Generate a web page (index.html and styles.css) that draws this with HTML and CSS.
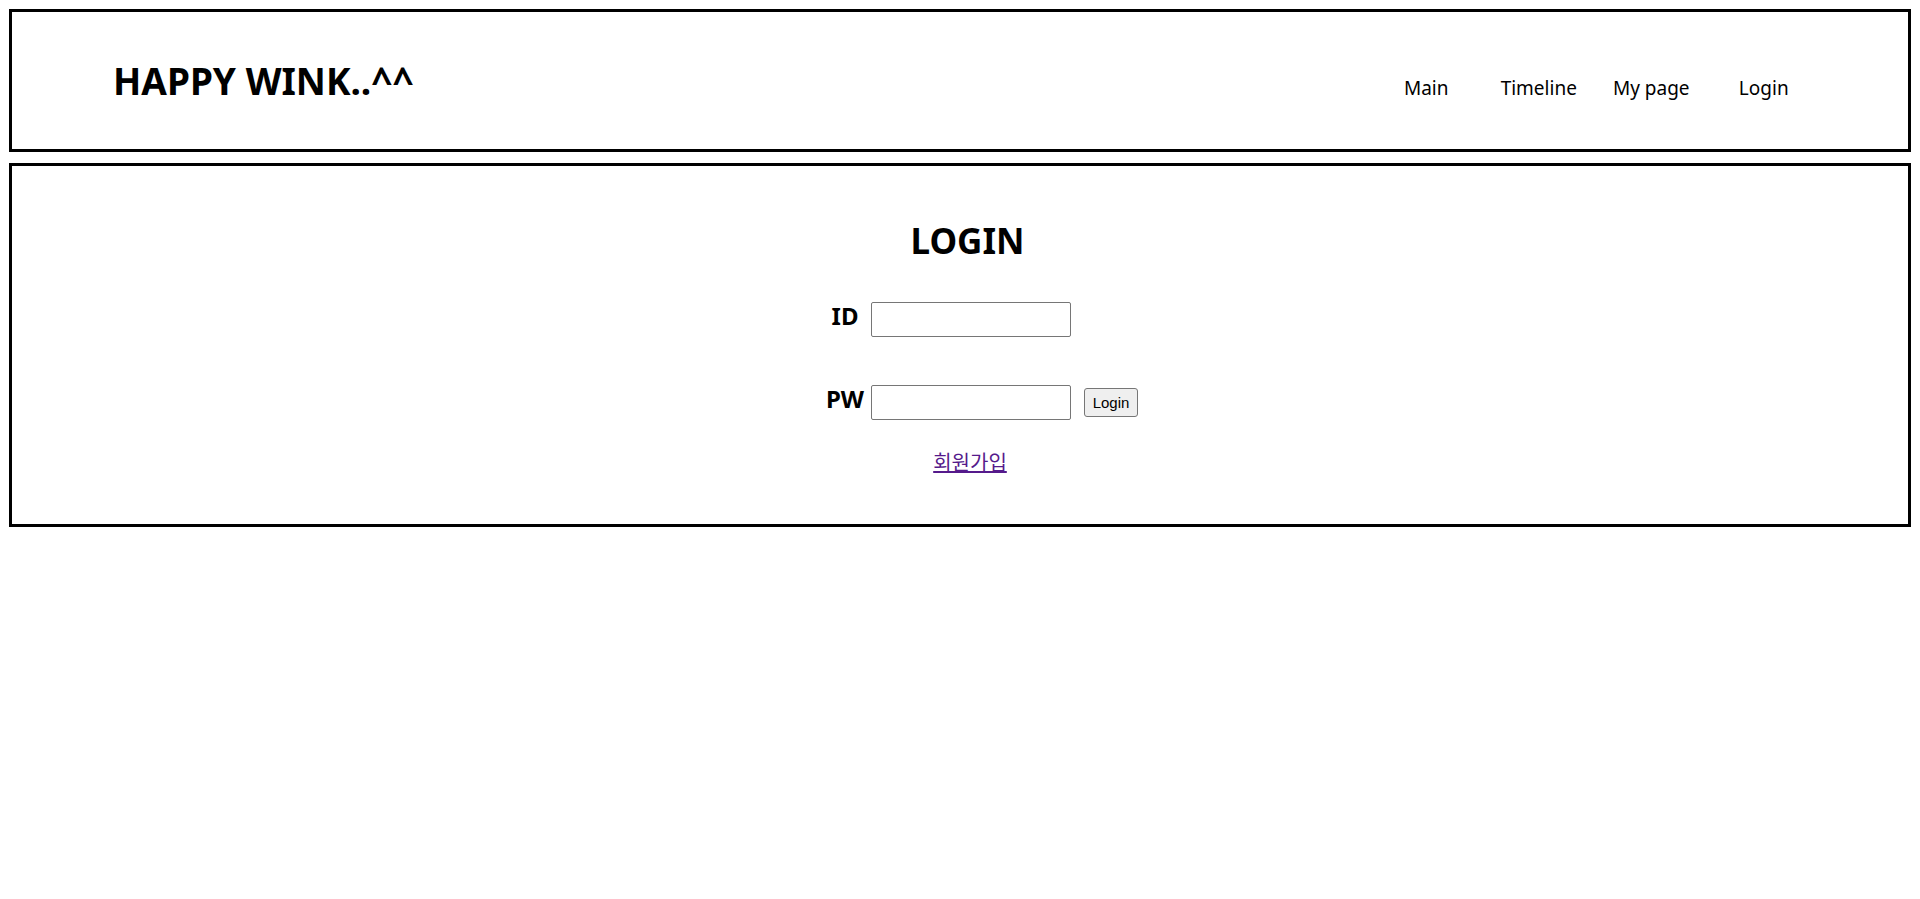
FILE: index.html
```html
<!DOCTYPE html>
<html lang="ko">
<head>
<meta charset="utf-8">
<title>HAPPY WINK</title>
<link rel="stylesheet" href="styles.css">
</head>
<body>
<header class="site-header">
  <h1 class="logo">HAPPY WINK..^^</h1>
  <nav class="nav">
    <a class="nav-item" href="#">Main</a>
    <a class="nav-item" href="#">Timeline</a>
    <a class="nav-item" href="#">My page</a>
    <a class="nav-item" href="#">Login</a>
  </nav>
</header>
<main class="login-box">
  <h2 class="login-title">LOGIN</h2>
  <form class="login-form">
    <div class="form-row">
      <label class="field-label" for="uid">ID</label>
      <input class="field-input" id="uid" type="text">
    </div>
    <div class="form-row row-pw">
      <label class="field-label label-pw" for="upw">PW</label>
      <input class="field-input" id="upw" type="password">
      <button class="login-btn" type="button">Login</button>
    </div>
  </form>
  <a class="join-link" href="#">회원가입</a>
</main>
</body>
</html>
```
FILE: styles.css
```css
html, body {
  margin: 0;
  padding: 0;
}
body {
  margin: 9px;
  font-family: "Noto Sans", "Open Sans", "Noto Sans CJK KR", sans-serif;
  color: #000;
  background: #fff;
}
.site-header {
  box-sizing: border-box;
  height: 143px;
  border: 3px solid #000;
  display: flex;
  justify-content: space-between;
  align-items: baseline;
  padding: 50px 88px 0 101px;
}
.logo {
  margin: 0;
  font-size: 37px;
  line-height: 37px;
  font-weight: 700;
}
.nav {
  display: flex;
}
.nav-item {
  width: 112.5px;
  text-align: center;
  font-size: 19px;
  line-height: 20px;
  color: #000;
  text-decoration: none;
}
.login-box {
  box-sizing: border-box;
  margin-top: 11px;
  border: 3px solid #000;
  display: flex;
  flex-direction: column;
  align-items: center;
  padding: 56px 0 52px;
}
.login-title {
  margin: 0 0 0 15px;
  font-size: 35px;
  line-height: 37px;
  font-weight: 700;
}
.login-form {
  margin: 43px 0 0 47px;
  display: flex;
  flex-direction: column;
  gap: 48px;
}
.form-row {
  display: flex;
  align-items: flex-start;
  width: 309px;
}
.field-label {
  display: flex;
  justify-content: center;
  width: 32px;
  margin: 2px 10px 0 0;
  font-size: 24px;
  line-height: 24px;
  font-weight: 700;
  white-space: nowrap;
}
.field-input {
  box-sizing: border-box;
  width: 200px;
  height: 35px;
  margin: 0;
  border: 1px solid #767676;
  border-radius: 2px;
  padding: 1px 2px;
  background: #fff;
}
.login-btn {
  box-sizing: border-box;
  margin: 3px 0 0 13px;
  width: 54px;
  height: 29px;
  padding: 0;
  border: 1px solid #767676;
  border-radius: 3px;
  background: #efefef;
  font-family: "Liberation Sans", Arial, sans-serif;
  font-size: 15px;
  color: #000;
}
.join-link {
  margin: 32px 0 0 20px;
  font-family: "Noto Sans CJK KR", sans-serif;
  font-size: 20px;
  line-height: 20px;
  color: #551a8b;
  text-decoration: underline;
}
```
